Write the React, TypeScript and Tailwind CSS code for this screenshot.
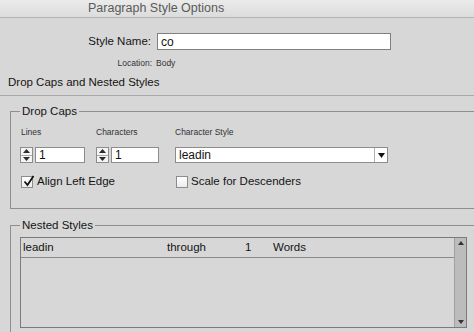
import React from 'react';

// small up/down stepper next to numeric fields
function Stepper() {
  return (
    <div className="w-[13px] h-[16px] border border-[#8c8c8c] bg-[#f4f4f4] flex flex-col">
      <div className="flex-1 flex items-center justify-center border-b border-[#a8a8a8]">
        <svg width="7" height="4" viewBox="0 0 7 4">
          <path d="M3.5 0L7 4H0z" fill="#2a2a2a" />
        </svg>
      </div>
      <div className="flex-1 flex items-center justify-center">
        <svg width="7" height="4" viewBox="0 0 7 4">
          <path d="M0 0H7L3.5 4z" fill="#2a2a2a" />
        </svg>
      </div>
    </div>
  );
}

function NumberField({ value, width }: { value: string; width: string }) {
  return (
    <div className={`${width} h-[16px] border border-[#8c8c8c] bg-white flex items-center pl-[3px] text-[12px] leading-none text-[#111]`}>
      {value}
    </div>
  );
}

function Checkbox({ checked }: { checked?: boolean }) {
  return (
    <div className="relative w-[12px] h-[12px] border border-[#8c8c8c] bg-gradient-to-b from-white to-[#ececec]">
      {checked && (
        <svg className="absolute left-[1px] -top-[2px]" width="12" height="12" viewBox="0 0 12 12">
          <path d="M1.5 6.5L4.5 10L10.5 1" fill="none" stroke="#111" strokeWidth="1.8" />
        </svg>
      )}
    </div>
  );
}

export default function App() {
  return (
    <div className="w-[474px] h-[332px] overflow-hidden bg-[#d7d7d7] text-[#141414] font-['Liberation_Sans',Arial,sans-serif]">
      {/* window title */}
      <div className="h-[18px] border-b border-[#b4b4b4] bg-gradient-to-b from-[#ebebeb] to-[#dcdcdc] flex items-center">
        <span className="ml-[88px] text-[12.5px] leading-none text-[#5a5a5a]">Paragraph Style Options</span>
      </div>

      <div className="mt-[15px] flex items-center">
        <div className="w-[151px] text-right text-[11.5px] leading-none">Style Name:</div>
        <div className="ml-[6px] w-[234px] h-[17px] border border-[#808080] bg-white flex items-center pl-[3px] text-[12px] leading-none">
          co
        </div>
      </div>

      <div className="mt-[8px] flex items-center h-[11px] text-[8.5px] leading-none text-[#333]">
        <div className="w-[152px] text-right">Location:</div>
        <div className="ml-[4px]">Body</div>
      </div>

      <div className="mt-[6px] ml-[8px] text-[11.5px] leading-[14px]">Drop Caps and Nested Styles</div>

      <div className="mt-[6px] h-px bg-[#a9a9a9]" />

      {/* Drop Caps group */}
      <fieldset className="mt-[8px] ml-[10px] w-[480px] border border-[#8f8f8f] pb-[19px]">
        <legend className="ml-[9px] px-[2px] text-[11.5px] leading-[14px]">Drop Caps</legend>
        <div className="pl-[9px] mt-[8px] flex">
          <div className="w-[76px] flex flex-col">
            <div className="ml-[1px] text-[8.5px] leading-[12px] text-[#333]">Lines</div>
            <div className="mt-[9px] flex gap-[2px]">
              <Stepper />
              <NumberField value="1" width="w-[50px]" />
            </div>
          </div>
          <div className="w-[79px] flex flex-col">
            <div className="text-[8.5px] leading-[12px] text-[#333]">Characters</div>
            <div className="mt-[9px] flex gap-[2px]">
              <Stepper />
              <NumberField value="1" width="w-[48px]" />
            </div>
          </div>
          <div className="flex flex-col">
            <div className="text-[8.5px] leading-[12px] text-[#333]">Character Style</div>
            <div className="mt-[9px] w-[213px] h-[16px] border border-[#8c8c8c] bg-white flex">
              <div className="flex-1 flex items-center pl-[3px] text-[12px] leading-none">leadin</div>
              <div className="w-[13px] border-l border-[#b0b0b0] flex items-center justify-center">
                <svg width="7" height="5" viewBox="0 0 7 5">
                  <path d="M0 0H7L3.5 5z" fill="#111" />
                </svg>
              </div>
            </div>
          </div>
        </div>
        <div className="pl-[10px] mt-[12px] flex items-center h-[14px]">
          <div className="w-[155px] flex items-center gap-[4px]">
            <Checkbox checked />
            <span className="text-[11.5px] leading-none">Align Left Edge</span>
          </div>
          <div className="flex items-center gap-[3px]">
            <Checkbox />
            <span className="text-[11.5px] leading-none">Scale for Descenders</span>
          </div>
        </div>
      </fieldset>

      {/* Nested Styles group */}
      <fieldset className="mt-[9px] ml-[10px] w-[480px] border border-[#8f8f8f] pb-[10px]">
        <legend className="ml-[9px] px-[2px] text-[11.5px] leading-[14px]">Nested Styles</legend>
        <div className="mt-[5px] ml-[9px] w-[447px] h-[91px] border border-[#7a7a7a] flex">
          <div className="flex-1 flex flex-col">
            <div className="h-[20px] border-b border-[#8a8a8a] flex items-center text-[11.5px] leading-none">
              <span className="ml-[2px] w-[144px]">leadin</span>
              <span className="w-[78px]">through</span>
              <span className="w-[28px]">1</span>
              <span>Words</span>
            </div>
          </div>
          <div className="w-[12px] border-l border-[#a0a0a0] bg-[#bcbcbc] flex flex-col items-center justify-between py-[3px]">
            <svg width="6" height="4" viewBox="0 0 6 4">
              <path d="M3 0L6 4H0z" fill="#333" />
            </svg>
            <svg width="6" height="4" viewBox="0 0 6 4">
              <path d="M0 0H6L3 4z" fill="#333" />
            </svg>
          </div>
        </div>
      </fieldset>
    </div>
  );
}
